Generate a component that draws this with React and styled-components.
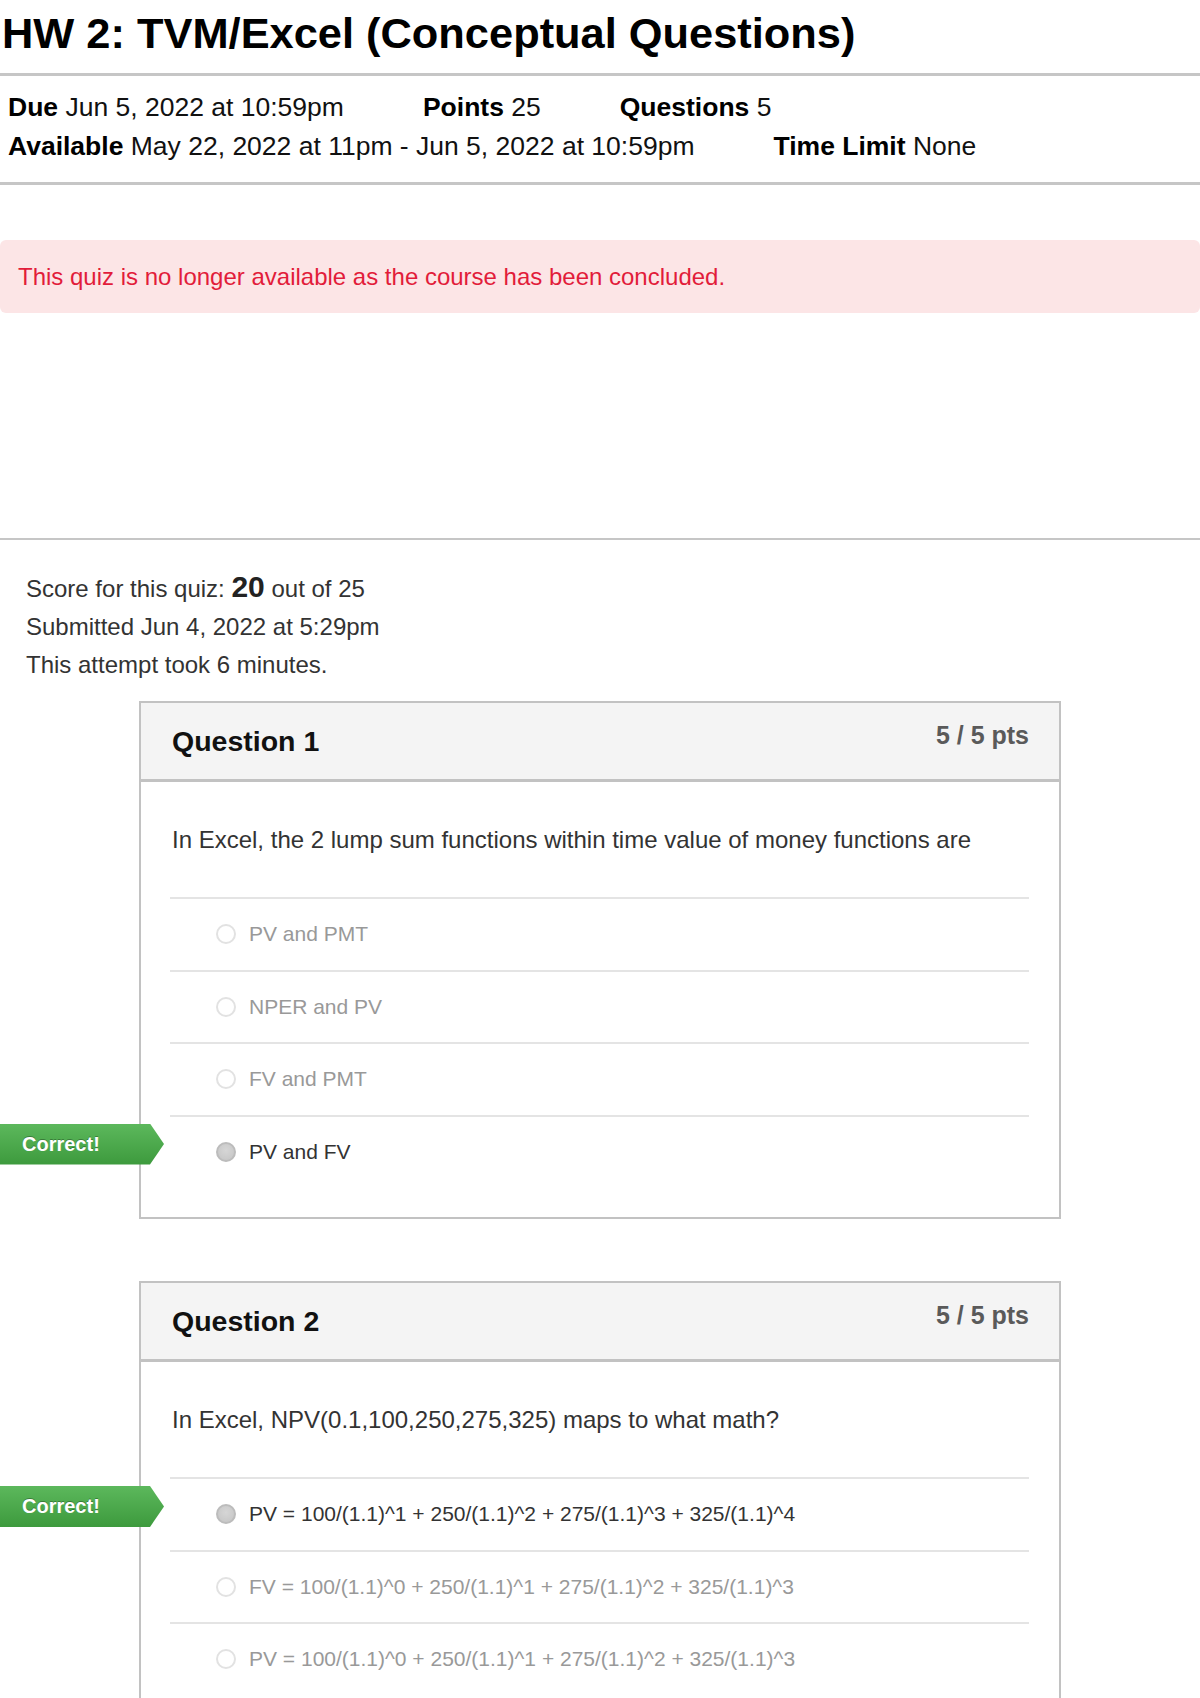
import React from 'react';
import styled, { createGlobalStyle } from 'styled-components';

const GlobalStyle = createGlobalStyle`
  body {
    margin: 0;
    background: #fff;
    font-family: "Liberation Sans", Arial, sans-serif;
    color: #000;
  }
`;

const questions = [
  {
    title: 'Question 1',
    pts: '5 / 5 pts',
    text: 'In Excel, the 2 lump sum functions within time value of money functions are',
    answers: [
      { label: 'PV and PMT' },
      { label: 'NPER and PV' },
      { label: 'FV and PMT' },
      { label: 'PV and FV', selected: true },
    ],
  },
  {
    title: 'Question 2',
    pts: '5 / 5 pts',
    text: 'In Excel, NPV(0.1,100,250,275,325) maps to what math?',
    answers: [
      { label: 'PV = 100/(1.1)^1 + 250/(1.1)^2 + 275/(1.1)^3 + 325/(1.1)^4', selected: true },
      { label: 'FV = 100/(1.1)^0 + 250/(1.1)^1 + 275/(1.1)^2 + 325/(1.1)^3' },
      { label: 'PV = 100/(1.1)^0 + 250/(1.1)^1 + 275/(1.1)^2 + 325/(1.1)^3' },
    ],
  },
];

export default function App() {
  return (
    <Page>
      <GlobalStyle />
      <Title>HW 2: TVM/Excel (Conceptual Questions)</Title>

      <Details>
        <DetailRow>
          <Detail><b>Due</b> Jun 5, 2022 at 10:59pm</Detail>
          <Detail><b>Points</b> 25</Detail>
          <Detail><b>Questions</b> 5</Detail>
        </DetailRow>
        <DetailRow>
          <Detail><b>Available</b> May 22, 2022 at 11pm - Jun 5, 2022 at 10:59pm</Detail>
          <Detail><b>Time Limit</b> None</Detail>
        </DetailRow>
      </Details>

      <Alert>This quiz is no longer available as the course has been concluded.</Alert>

      <Divider />

      <Score>
        <div>Score for this quiz: <Big>20</Big> out of 25</div>
        <div>Submitted Jun 4, 2022 at 5:29pm</div>
        <div>This attempt took 6 minutes.</div>
      </Score>

      {questions.map((q, i) => {
        return (
          <QuestionBox key={i}>
            <QuestionHeader>
              <QuestionTitle>{q.title}</QuestionTitle>
              <Pts>{q.pts}</Pts>
            </QuestionHeader>
            <QuestionBody>
              <QuestionText>{q.text}</QuestionText>
              {q.answers.map((a, j) => {
                return (
                  <Answer key={j}>
                    {a.selected && <Correct>Correct!</Correct>}
                    <Radio selected={a.selected} />
                    <AnswerLabel selected={a.selected}>{a.label}</AnswerLabel>
                  </Answer>
                )
              })}
            </QuestionBody>
          </QuestionBox>
        )
      })}
    </Page>
  )
}

const Page = styled.div`
  width: 1200px;
  padding-bottom: 60px;
`
const Title = styled.h1`
  margin: 0;
  padding: 7px 0 14px 2px;
  font-size: 43.4px;
  line-height: 52px;
  font-weight: bold;
  color: #000;
  border-bottom: 3px solid #c6c6c6;
`
const Details = styled.div`
  padding: 12px 0 16px 8px;
  border-bottom: 3px solid #c6c6c6;
`
const DetailRow = styled.div`
  display: flex;
  column-gap: 79px;
  font-size: 26.5px;
  line-height: 39px;
  color: #111;
  b {
    color: #000;
  }
`
const Detail = styled.span`
  white-space: nowrap;
`
const Alert = styled.div`
  margin-top: 55px;
  height: 73px;
  display: flex;
  align-items: center;
  padding: 0 18px;
  box-sizing: border-box;
  background: #fce5e6;
  border-radius: 6px;
  color: #e21c3a;
  font-size: 24px;
`
const Divider = styled.div`
  margin-top: 225px;
  border-top: 2px solid #c6c6c6;
`
const Score = styled.div`
  padding: 28px 0 0 26px;
  font-size: 24px;
  line-height: 38px;
  color: #333;
`
const Big = styled.b`
  font-size: 30px;
  color: #222;
`
const QuestionBox = styled.div`
  width: 922px;
  box-sizing: border-box;
  margin: 17px auto 0;
  border: 2px solid #c2c2c2;
  & + & {
    margin-top: 62px;
  }
`
const QuestionHeader = styled.div`
  display: flex;
  justify-content: space-between;
  align-items: center;
  height: 76px;
  padding: 0 30px 0 31px;
  background: #f4f4f4;
  border-bottom: 3px solid #c2c2c2;
`
const QuestionTitle = styled.div`
  font-size: 28.5px;
  font-weight: bold;
  color: #111;
`
const Pts = styled.div`
  font-size: 25px;
  font-weight: bold;
  color: #5a5a5a;
  margin-bottom: 12px;
`
const QuestionBody = styled.div`
  padding: 43px 30px 30px 29px;
`
const QuestionText = styled.div`
  padding-left: 2px;
  font-size: 24px;
  line-height: 30px;
  color: #333;
  margin-bottom: 42px;
`
const Answer = styled.div`
  position: relative;
  display: flex;
  align-items: center;
  height: 70.5px;
  border-top: 2px solid #e4e4e4;
`
const Radio = styled.span`
  width: 20px;
  height: 20px;
  box-sizing: border-box;
  margin-left: 46px;
  border-radius: 50%;
  border: 2px solid ${props => props.selected ? '#bcbcbc' : '#e2e2e2'};
  background: ${props => props.selected ? 'radial-gradient(circle at 50% 40%, #d6d6d6, #c4c4c4)' : '#fff'};
`
const AnswerLabel = styled.span`
  margin-left: 13px;
  font-size: 21px;
  color: ${props => props.selected ? '#333' : '#999'};
`
const Correct = styled.div`
  position: absolute;
  left: -170px;
  top: 7px;
  width: 164px;
  height: 41px;
  box-sizing: border-box;
  padding-left: 22px;
  line-height: 41px;
  font-size: 20px;
  font-weight: bold;
  color: #fff;
  text-shadow: 0 -1px 0 rgba(0, 0, 0, 0.3);
  background: linear-gradient(#5cb85c, #3d9a3d);
  clip-path: polygon(0 0, 150px 0, 164px 50%, 150px 100%, 0 100%);
`
